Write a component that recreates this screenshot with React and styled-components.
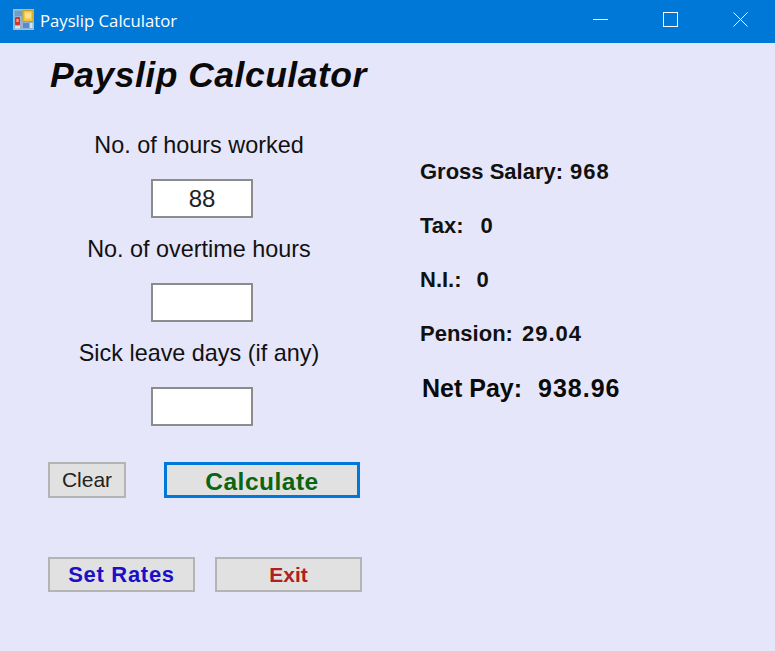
import React from "react";
import styled, { createGlobalStyle } from "styled-components";

const Global = createGlobalStyle`
  html, body { margin: 0; padding: 0; background: #e6e6fa; }
  * { box-sizing: border-box; }
`;

const Win = styled.div`
  width: 775px; height: 651px; display: flex; flex-direction: column; overflow: hidden;
  background: #e6e6fa; font-family: "Liberation Sans", Arial, sans-serif; color: #111;
`;
const TitleBar = styled.header`
  height: 43px; flex: none; background: #0078d7; color: #fff; display: flex; align-items: center; padding: 0 0 4px 13px;
`;
const AppName = styled.span`
  font-family: "Open Sans", "Noto Sans", sans-serif; font-size: 16.7px; margin-left: 6px; flex: 1; padding-top: 2px;
`;
const WinButton = styled.button`
  width: 70px; height: 39px; padding: 0; border: 0; background: none; display: flex; align-items: center; justify-content: center;
`;
const Body = styled.main`
  flex: 1; display: flex; padding-left: 48px;
`;
const Left = styled.section`
  width: 314px; flex: none; display: flex; flex-direction: column;
`;
const Heading = styled.h1`
  margin: 12px 0 0 2px; height: 40px; font-size: 35.5px; line-height: 40px; font-weight: bold; font-style: italic;
  letter-spacing: 0.5px; color: #0a0a0a; white-space: nowrap;
`;
const Fields = styled.div`
  margin-top: 36px; display: flex; flex-direction: column; align-items: center; padding-right: 6px;
`;
const Label = styled.label`
  height: 28px; line-height: 28px; font-size: 23.4px; white-space: nowrap; margin: 0 6px 20px 0;
`;
const Input = styled.input`
  width: 102px; height: 39px; flex: none; border: 2px solid #8c8c8c; background: #fff; text-align: center;
  font: 24px "Liberation Sans", Arial, sans-serif; color: #222; padding: 0; outline: none; margin-bottom: 17px;
`;
const ButtonRow = styled.div`
  display: flex; gap: ${p => p.$gap}px; margin-top: ${p => p.$top}px;
`;
const Btn = styled.button`
  width: ${p => p.$w}px; height: ${p => p.$h}px; padding: ${p => p.$pad || 0}px 0 0; background: #e1e1e1;
  border: ${p => p.$focus ? "3px solid #0078d7" : "2px solid #b4b4b4"};
  color: ${p => p.$color}; font-family: "Liberation Sans", Arial, sans-serif;
  font-size: ${p => p.$size}px; font-weight: ${p => p.$bold ? "bold" : "normal"};
  letter-spacing: ${p => p.$spacing || 0}px;
`;
const Right = styled.section`
  margin-left: 58px; padding-top: 102px; display: flex; flex-direction: column;
`;
const Row = styled.div`
  height: 54px; display: flex; align-items: center; gap: ${p => p.$gap}px; white-space: nowrap;
  font-weight: bold; font-size: 22px;
`;
const Value = styled.span`
  letter-spacing: 1px;
`;
const NetRow = styled(Row)`
  font-size: 25px; margin-left: 2px; color: #0a0a0a;
`;

const Icon = () => (
  <svg width="21" height="21" viewBox="0 0 21 21">
    <rect x="0.5" y="0.5" width="20" height="20" fill="#8fb4cf" stroke="#a8bccb" />
    <rect x="2" y="2" width="7" height="5" fill="#6f9dc4" />
    <rect x="2" y="8" width="5" height="8" rx="1" fill="#d8302a" />
    <rect x="3.5" y="10" width="2" height="3" fill="#f2b8a8" />
    <rect x="10" y="1.5" width="10" height="11" fill="#f5c63a" stroke="#c99a22" />
    <rect x="12" y="3.5" width="6" height="6" fill="#fbe28a" />
    <rect x="2" y="17" width="5" height="2.5" fill="#d7e3ec" />
    <rect x="10" y="14" width="6" height="5" fill="#5f86d6" />
    <rect x="17" y="14" width="2.5" height="5" fill="#d7e3ec" />
  </svg>
);

export default function App() {
  return (
    <Win>
      <Global />
      <TitleBar>
        <Icon />
        <AppName>Payslip Calculator</AppName>
        <WinButton aria-label="Minimise">
          <svg width="15" height="15" viewBox="0 0 15 15"><path d="M0 7.5H15" stroke="#fff" fill="none" /></svg>
        </WinButton>
        <WinButton aria-label="Maximise">
          <svg width="15" height="15" viewBox="0 0 15 15"><rect x="0.5" y="0.5" width="14" height="14" stroke="#fff" fill="none" /></svg>
        </WinButton>
        <WinButton aria-label="Close">
          <svg width="15" height="15" viewBox="0 0 15 15"><path d="M0.5 0.5L14.5 14.5M14.5 0.5L0.5 14.5" stroke="#fff" fill="none" /></svg>
        </WinButton>
      </TitleBar>
      <Body>
        <Left>
          <Heading>Payslip Calculator</Heading>
          <Fields>
            <Label>No. of hours worked</Label>
            <Input defaultValue="88" />
            <Label>No. of overtime hours</Label>
            <Input />
            <Label>Sick leave days (if any)</Label>
            <Input />
          </Fields>
          <ButtonRow $gap={38} $top={19}>
            <Btn $w={78} $h={36} $size={21} $color="#222">Clear</Btn>
            <Btn $w={196} $h={36} $size={24.5} $spacing={0.5} $pad={3} $bold $focus $color="#0a6410">Calculate</Btn>
          </ButtonRow>
          <ButtonRow $gap={20} $top={59}>
            <Btn $w={147} $h={35} $size={22} $spacing={0.7} $bold $color="#1a10c8">Set Rates</Btn>
            <Btn $w={147} $h={35} $size={21} $bold $color="#b02020">Exit</Btn>
          </ButtonRow>
        </Left>
        <Right>
          <Row $gap={7}><span>Gross Salary:</span><Value>968</Value></Row>
          <Row $gap={17}><span>Tax:</span><Value>0</Value></Row>
          <Row $gap={15}><span>N.I.:</span><Value>0</Value></Row>
          <Row $gap={9}><span>Pension:</span><Value>29.04</Value></Row>
          <NetRow $gap={16}><span>Net Pay:</span><Value>938.96</Value></NetRow>
        </Right>
      </Body>
    </Win>
  );
}
